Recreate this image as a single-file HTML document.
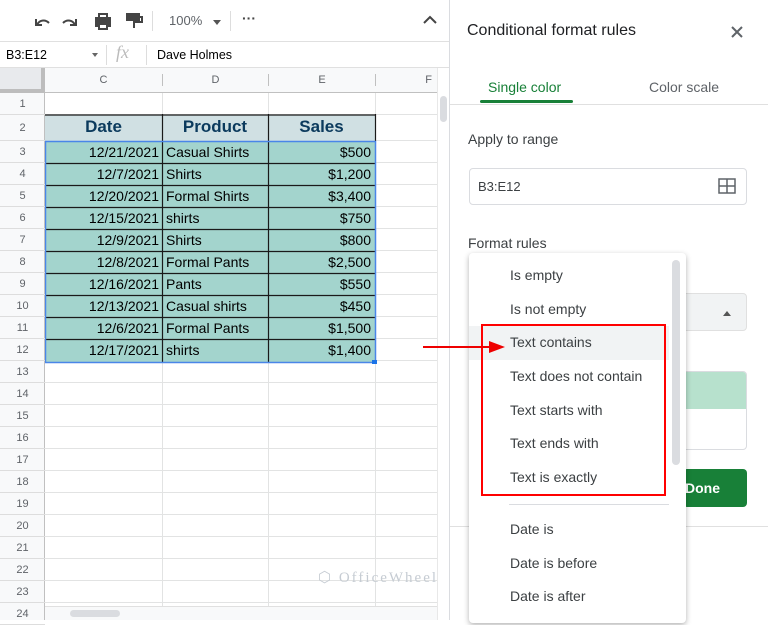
<!DOCTYPE html><html><head><style>
*{margin:0;padding:0;box-sizing:border-box}
body{width:768px;height:620px;overflow:hidden;background:#fff;font-family:"Liberation Sans",Arial,sans-serif;position:relative}
.a{position:absolute}
.g{color:#5f6368}
.cell{position:absolute;font-size:14px;color:#000;line-height:22px;white-space:nowrap}
</style></head><body>
<!-- toolbar -->
<div class="a" style="left:0;top:0;width:449px;height:42px;border-bottom:1px solid #e0e0e0"></div>
<svg class="a" style="left:30px;top:10px" width="120" height="22" viewBox="0 0 120 22" fill="none" stroke="#444" stroke-width="2">
<path d="M7 15c2-5 8-6 12-2M6 9v6h6"/><path d="M37 15c-2-5-8-6-12-2M38 9v6h-6" transform="translate(8 0)"/>
<rect x="66" y="8" width="14" height="8" fill="#444"/><rect x="69" y="4" width="8" height="4"/><rect x="69" y="14" width="8" height="5" fill="#fff"/>
<rect x="97" y="4" width="12" height="6" fill="#444"/><path d="M109 7h3v5h-8v6"/></svg>
<div class="a" style="left:152px;top:11px;width:1px;height:20px;background:#ddd"></div>
<div class="a g" style="left:169px;top:13px;font-size:13px">100%</div>
<div class="a" style="left:213px;top:20px;border:4px solid transparent;border-top:5px solid #555"></div>
<div class="a" style="left:230px;top:11px;width:1px;height:20px;background:#ddd"></div>
<div class="a" style="left:242px;top:10px;font-size:14px;color:#444;font-weight:bold">···</div>
<svg class="a" style="left:422px;top:14px" width="16" height="12"><path d="M2 9l6-6 6 6" stroke="#444" stroke-width="2" fill="none"/></svg>
<!-- formula bar -->
<div class="a" style="left:0;top:42px;width:449px;height:26px;border-bottom:1px solid #e0e0e0"></div>
<div class="a" style="left:6px;top:48px;font-size:12.5px;color:#000">B3:E12</div>
<div class="a" style="left:92px;top:53px;border:3px solid transparent;border-top:4px solid #666"></div>
<div class="a" style="left:106px;top:45px;width:1px;height:20px;background:#ddd"></div>
<div class="a" style="left:116px;top:42px;font-size:18px;color:#bbb;font-style:italic;font-family:'Liberation Serif',serif">fx</div>
<div class="a" style="left:146px;top:45px;width:1px;height:20px;background:#ddd"></div>
<div class="a" style="left:157px;top:48px;font-size:12.5px;color:#000">Dave Holmes</div>
<!-- headers -->
<div class="a" style="left:0;top:68px;width:437px;height:25px;background:#f8f9fa;border-bottom:1px solid #c0c0c0"></div>
<div class="a" style="left:0;top:68px;width:45px;height:25px;background:#e8eaed;border-right:4px solid #bdbdbd;border-bottom:4px solid #bdbdbd"></div>
<div class="a" style="left:0;top:93px;width:45px;height:527px;background:#f8f9fa;border-right:1px solid #c0c0c0"></div>
<div class="a g" style="left:45px;top:74px;width:117px;text-align:center;font-size:11px">C</div>
<div class="a g" style="left:162px;top:74px;width:106px;text-align:center;font-size:11px;border-left:1px solid #c0c0c0">D</div>
<div class="a g" style="left:268px;top:74px;width:107px;text-align:center;font-size:11px;border-left:1px solid #c0c0c0">E</div>
<div class="a g" style="left:375px;top:74px;width:62px;text-align:right;padding-right:5px;font-size:11px;border-left:1px solid #c0c0c0">F</div>
<div id="grid"></div>
<!-- table -->
<div class="a" style="left:45px;top:115px;width:331px;height:26px;background:#d0e0e3"></div>
<div class="a" style="left:45px;top:141px;width:331px;height:221px;background:#a3d4cd"></div>
<svg class="a" style="left:45px;top:114px" width="332" height="250">
<g stroke="#1a1a1a" stroke-width="1.2"><line x1="0" y1="1" x2="331" y2="1"/>
<line x1="117.5" y1="0" x2="117.5" y2="248"/><line x1="223.5" y1="0" x2="223.5" y2="248"/><line x1="330.5" y1="0" x2="330.5" y2="27"/>
<line x1="0" y1="49.5" x2="331" y2="49.5"/><line x1="0" y1="71.5" x2="331" y2="71.5"/><line x1="0" y1="93.5" x2="331" y2="93.5"/><line x1="0" y1="115.5" x2="331" y2="115.5"/><line x1="0" y1="137.5" x2="331" y2="137.5"/><line x1="0" y1="159.5" x2="331" y2="159.5"/><line x1="0" y1="181.5" x2="331" y2="181.5"/><line x1="0" y1="203.5" x2="331" y2="203.5"/><line x1="0" y1="225.5" x2="331" y2="225.5"/></g>
<rect x="0.5" y="27.5" width="330" height="221" fill="none" stroke="#4a86e8" stroke-width="1.5"/>
<rect x="327" y="246" width="5" height="4" fill="#1a73e8"/></svg>
<div class="a" style="left:45px;top:117px;width:117px;text-align:center;font-size:17px;font-weight:bold;color:#0b3a5d">Date</div>
<div class="a" style="left:162px;top:117px;width:106px;text-align:center;font-size:17px;font-weight:bold;color:#0b3a5d">Product</div>
<div class="a" style="left:268px;top:117px;width:107px;text-align:center;font-size:17px;font-weight:bold;color:#0b3a5d">Sales</div>
<div id="rows"></div>
<script>
var d=[["12/21/2021","Casual Shirts","$500"],["12/7/2021","Shirts","$1,200"],["12/20/2021","Formal Shirts","$3,400"],["12/15/2021","shirts","$750"],["12/9/2021","Shirts","$800"],["12/8/2021","Formal Pants","$2,500"],["12/16/2021","Pants","$550"],["12/13/2021","Casual shirts","$450"],["12/6/2021","Formal Pants","$1,500"],["12/17/2021","shirts","$1,400"]];
var h="";
d.forEach(function(r,i){var t=141+i*22;h+='<div class="cell" style="left:45px;top:'+t+'px;width:114px;text-align:right">'+r[0]+'</div><div class="cell" style="left:166px;top:'+t+'px">'+r[1]+'</div><div class="cell" style="left:268px;top:'+t+'px;width:103px;text-align:right">'+r[2]+'</div>';});
var ys=[93,115];for(var i=3;i<=24;i++)ys.push(141+(i-3)*22);
ys.forEach(function(y,i){var hh=i==0?22:(i==1?26:22);h+='<div class="a g" style="left:0;top:'+y+'px;width:45px;height:'+hh+'px;line-height:'+hh+'px;text-align:center;font-size:11px;border-bottom:1px solid #ddd">'+(i+1)+'</div>';});
document.getElementById("rows").innerHTML=h;
var g='<svg class="a" style="left:45px;top:93px" width="392" height="527"><g stroke="#e2e3e3">';
ys.forEach(function(y,i){var yy=(i==0?115:(i==1?141:y+22))-93-0.5;g+='<line x1="0" y1="'+yy+'" x2="392" y2="'+yy+'"/>';});
g+='<line x1="117.5" y1="0" x2="117.5" y2="527"/><line x1="223.5" y1="0" x2="223.5" y2="527"/><line x1="330.5" y1="0" x2="330.5" y2="527"/></g></svg>';
document.getElementById("grid").innerHTML=g;
</script>
<!-- scrollbars -->
<div class="a" style="left:437px;top:68px;width:12px;height:552px;background:#fff;border-left:1px solid #e8e8e8"></div>
<div class="a" style="left:440px;top:96px;width:7px;height:26px;background:#dadce0;border-radius:4px"></div>
<div class="a" style="left:45px;top:606px;width:392px;height:14px;background:#f8f9fa;border-top:1px solid #e0e0e0"></div>
<div class="a" style="left:70px;top:610px;width:50px;height:7px;background:#dadce0;border-radius:4px"></div>
<div class="a" style="left:318px;top:568px;font-family:'Liberation Serif',serif;font-size:15px;color:#c6ccd3;letter-spacing:2px">⬡ OfficeWheel</div>
<!-- panel -->
<div class="a" style="left:449px;top:0;width:319px;height:620px;background:#fff;border-left:1px solid #dadce0"></div>
<div class="a" style="left:467px;top:22px;font-size:16px;color:#202124">Conditional format rules</div>
<svg class="a" style="left:730px;top:25px" width="14" height="14"><path d="M2 2l10 10M12 2L2 12" stroke="#5f6368" stroke-width="2"/></svg>
<div class="a" style="left:488px;top:79px;font-size:14px;color:#188038">Single color</div>
<div class="a" style="left:480px;top:100px;width:93px;height:3px;background:#188038;border-radius:2px"></div>
<div class="a g" style="left:649px;top:79px;font-size:14px">Color scale</div>
<div class="a" style="left:450px;top:104px;width:318px;height:1px;background:#e0e0e0"></div>
<div class="a" style="left:468px;top:131px;font-size:14px;color:#3c4043">Apply to range</div>
<div class="a" style="left:469px;top:168px;width:278px;height:37px;border:1px solid #dadce0;border-radius:4px"></div>
<div class="a" style="left:478px;top:179px;font-size:13px;color:#3c4043">B3:E12</div>
<svg class="a" style="left:718px;top:178px" width="18" height="16"><rect x="1" y="1" width="16" height="14" fill="none" stroke="#5f6368" stroke-width="1.5"/><path d="M1 8h16M9 1v14" stroke="#5f6368" stroke-width="1.5"/></svg>
<div class="a" style="left:468px;top:235px;font-size:14px;color:#3c4043">Format rules</div>
<div class="a" style="left:469px;top:293px;width:278px;height:38px;background:#f1f3f4;border:1px solid #e0e0e0;border-radius:4px"></div>
<div class="a" style="left:723px;top:307px;border:4px solid transparent;border-bottom:5px solid #555"></div>
<div class="a" style="left:469px;top:371px;width:278px;height:79px;border:1px solid #dadce0;border-radius:4px;overflow:hidden"><div style="height:37px;background:#b7e1cd"></div></div>
<div class="a" style="left:683px;top:469px;width:64px;height:38px;background:#188038;border-radius:4px;color:#fff;font-size:14px;font-weight:bold;line-height:38px;padding-left:2px">Done</div>
<div class="a" style="left:450px;top:526px;width:318px;height:1px;background:#e0e0e0"></div>
<!-- dropdown -->
<div class="a" style="left:469px;top:253px;width:217px;height:370px;background:#fff;border-radius:4px;box-shadow:0 2px 6px rgba(0,0,0,.3)"></div>
<div class="a" style="left:469px;top:326px;width:200px;height:34px;background:#f1f3f4"></div>
<div class="a" style="left:672px;top:260px;width:8px;height:205px;background:#dadce0;border-radius:4px"></div>
<div class="a" style="left:509px;top:504px;width:160px;height:1px;background:#dadce0"></div>
<div class="a" style="left:510px;top:266px;font-size:14px;color:#3c4043;line-height:18px">
<div style="height:34px">Is empty</div><div style="height:33px">Is not empty</div><div style="height:34px">Text contains</div><div style="height:34px">Text does not contain</div><div style="height:33px">Text starts with</div><div style="height:34px">Text ends with</div><div style="height:52px">Text is exactly</div><div style="height:34px">Date is</div><div style="height:33px">Date is before</div><div>Date is after</div></div>
<div class="a" style="left:481px;top:324px;width:185px;height:172px;border:2px solid #f00"></div>
<div class="a" style="left:423px;top:346px;width:68px;height:2px;background:#e00"></div>
<div class="a" style="left:489px;top:341px;border-top:6px solid transparent;border-bottom:6px solid transparent;border-left:16px solid #e00"></div>
</body></html>
